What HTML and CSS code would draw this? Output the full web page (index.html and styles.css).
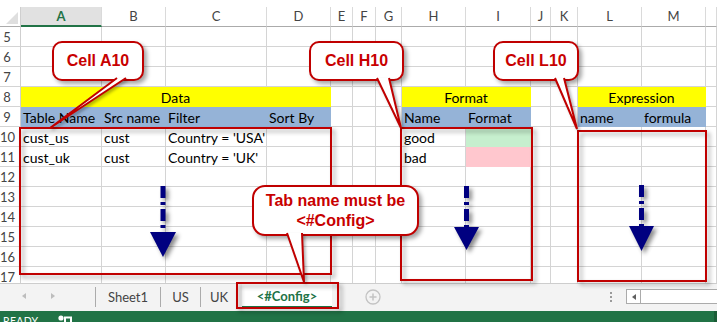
FILE: index.html
```html
<!DOCTYPE html>
<html>
<head>
<meta charset="utf-8">
<link rel="stylesheet" href="styles.css">
</head>
<body>
<div class="app">
  <div class="sheet">
    <div class="strip"></div>
    <div class="grid">
      <div class="c corner"><span class="tri"></span></div>
      <div class="c h sel">A</div><div class="c h">B</div><div class="c h">C</div><div class="c h">D</div><div class="c h">E</div><div class="c h">F</div><div class="c h">G</div><div class="c h">H</div><div class="c h">I</div><div class="c h">J</div><div class="c h">K</div><div class="c h">L</div><div class="c h">M</div><div class="c h"></div>

      <div class="c rh">5</div><div class="c"></div><div class="c"></div><div class="c"></div><div class="c"></div><div class="c"></div><div class="c"></div><div class="c"></div><div class="c"></div><div class="c"></div><div class="c"></div><div class="c"></div><div class="c"></div><div class="c"></div><div class="c"></div>
      <div class="c rh">6</div><div class="c"></div><div class="c"></div><div class="c"></div><div class="c"></div><div class="c"></div><div class="c"></div><div class="c"></div><div class="c"></div><div class="c"></div><div class="c"></div><div class="c"></div><div class="c"></div><div class="c"></div><div class="c"></div>
      <div class="c rh">7</div><div class="c"></div><div class="c"></div><div class="c"></div><div class="c"></div><div class="c"></div><div class="c"></div><div class="c"></div><div class="c"></div><div class="c"></div><div class="c"></div><div class="c"></div><div class="c"></div><div class="c"></div><div class="c"></div>

      <div class="c rh">8</div><div class="c y s4">Data</div><div class="c"></div><div class="c"></div><div class="c"></div><div class="c y s2">Format</div><div class="c"></div><div class="c"></div><div class="c y s2">Expression</div><div class="c"></div>

      <div class="c rh">9</div><div class="c b">Table Name</div><div class="c b">Src name</div><div class="c b">Filter</div><div class="c b">Sort By</div><div class="c"></div><div class="c"></div><div class="c"></div><div class="c b">Name</div><div class="c b">Format</div><div class="c"></div><div class="c"></div><div class="c b">name</div><div class="c b">formula</div><div class="c"></div>

      <div class="c rh">10</div><div class="c">cust_us</div><div class="c">cust</div><div class="c">Country = 'USA'</div><div class="c"></div><div class="c"></div><div class="c"></div><div class="c"></div><div class="c">good</div><div class="c g"></div><div class="c"></div><div class="c"></div><div class="c"></div><div class="c"></div><div class="c"></div>
      <div class="c rh">11</div><div class="c">cust_uk</div><div class="c">cust</div><div class="c">Country = 'UK'</div><div class="c"></div><div class="c"></div><div class="c"></div><div class="c"></div><div class="c">bad</div><div class="c p"></div><div class="c"></div><div class="c"></div><div class="c"></div><div class="c"></div><div class="c"></div>

      <div class="c rh">12</div><div class="c"></div><div class="c"></div><div class="c"></div><div class="c"></div><div class="c"></div><div class="c"></div><div class="c"></div><div class="c"></div><div class="c"></div><div class="c"></div><div class="c"></div><div class="c"></div><div class="c"></div><div class="c"></div>
      <div class="c rh">13</div><div class="c"></div><div class="c"></div><div class="c"></div><div class="c"></div><div class="c"></div><div class="c"></div><div class="c"></div><div class="c"></div><div class="c"></div><div class="c"></div><div class="c"></div><div class="c"></div><div class="c"></div><div class="c"></div>
      <div class="c rh">14</div><div class="c"></div><div class="c"></div><div class="c"></div><div class="c"></div><div class="c"></div><div class="c"></div><div class="c"></div><div class="c"></div><div class="c"></div><div class="c"></div><div class="c"></div><div class="c"></div><div class="c"></div><div class="c"></div>
      <div class="c rh">15</div><div class="c"></div><div class="c"></div><div class="c"></div><div class="c"></div><div class="c"></div><div class="c"></div><div class="c"></div><div class="c"></div><div class="c"></div><div class="c"></div><div class="c"></div><div class="c"></div><div class="c"></div><div class="c"></div>
      <div class="c rh">16</div><div class="c"></div><div class="c"></div><div class="c"></div><div class="c"></div><div class="c"></div><div class="c"></div><div class="c"></div><div class="c"></div><div class="c"></div><div class="c"></div><div class="c"></div><div class="c"></div><div class="c"></div><div class="c"></div>
      <div class="c rh">17</div><div class="c"></div><div class="c"></div><div class="c"></div><div class="c"></div><div class="c"></div><div class="c"></div><div class="c"></div><div class="c"></div><div class="c"></div><div class="c"></div><div class="c"></div><div class="c"></div><div class="c"></div><div class="c"></div>
    </div>
  </div>

  <div class="tabbar">
    <div class="nav"><span class="tri-l"></span><span class="tri-r"></span></div>
    <div class="tab t1">Sheet1</div>
    <div class="tab t2">US</div>
    <div class="tab t3">UK</div>
    <div class="tab active">&lt;#Config&gt;</div>
    <svg class="add" width="16" height="16" viewBox="0 0 16 16"><circle cx="8" cy="8" r="7" fill="none" stroke="#c3c3c3" stroke-width="1.3"/><path d="M8 4.5V11.5M4.5 8H11.5" stroke="#c3c3c3" stroke-width="1.5"/></svg>
    <div class="spacer"></div>
    <div class="dots"><span></span><span></span><span></span></div>
    <div class="hscroll"><div class="sbtn"><span class="stri"></span></div></div>
  </div>

  <div class="status">
    <span class="ready">READY</span>
    <svg class="macro" width="14" height="11" viewBox="0 0 14 11"><circle cx="3" cy="3" r="2.6" fill="#fff"/><rect x="6" y="1.5" width="8" height="9" fill="#fff"/><rect x="8" y="3.5" width="4" height="4" fill="#217346"/></svg>
    <span class="sfill"></span>
    <span class="edge"></span>
  </div>

  <div class="frame f1"></div>
  <div class="frame f2"></div>
  <div class="frame f3"></div>
  <div class="frame f4"></div>

  <div class="callout k1">Cell A10</div>
  <div class="callout k2">Cell H10</div>
  <div class="callout k3">Cell L10</div>
  <div class="callout k4">Tab name must be<br>&lt;#Config&gt;</div>

  <svg class="overlay" width="717" height="322" viewBox="0 0 717 322">
    <g class="tail">
      <path d="M117,78 L50,128 L126,78" />
      <path d="M377,78 L401,128 L389,78" />
      <path d="M555,78 L577,129 L564,78" />
      <path d="M287,233 L304,282 L302,233" />
    </g>
    <g class="arrow">
      <line x1="163" y1="186" x2="163" y2="234" />
      <polygon points="150,232 176,232 163,257" />
      <line x1="466.5" y1="186" x2="466.5" y2="229" />
      <polygon points="454,227 479,227 466.5,250" />
      <line x1="641.5" y1="185" x2="641.5" y2="228" />
      <polygon points="629,226 654,226 641.5,251" />
    </g>
  </svg>
</div>
</body>
</html>
```

FILE: styles.css
```css
* { box-sizing: border-box; }

body {
  margin: 0;
  background: #fff;
}

.app {
  position: relative;
  width: 717px;
  height: 322px;
  overflow: hidden;
  font-family: Lato, "Liberation Sans", Arial, sans-serif;
  background: #fff;
}

.sheet {
  height: 283px;
  overflow: hidden;
}

.strip { height: 7px; }

.grid {
  display: grid;
  grid-template-columns: 21px 81px 64px 101px 64px 22px 23px 26px 64px 65px 20px 27px 64px 64px 11px;
  grid-auto-rows: 20px;
}

.c {
  border-right: 1px solid #d4d4d4;
  border-bottom: 1px solid #d4d4d4;
  padding: 1px 0 0 2px;
  font-size: 14px;
  line-height: 19px;
  white-space: nowrap;
  color: #000;
}

.h {
  padding: 0;
  text-align: center;
  color: #444;
  font-size: 13px;
  line-height: 19px;
  border-right-color: #dadada;
  border-bottom-color: #ababab;
}

.h.sel {
  background: #e1e1e1;
  border-bottom: 2px solid #217346;
  color: #217346;
  font-weight: bold;
}

.corner {
  padding: 0 2px 2px 0;
  display: flex;
  align-items: flex-end;
  justify-content: flex-end;
  border-right-color: #cfcfcf;
  border-bottom-color: #ababab;
}

.corner .tri {
  width: 12px;
  height: 12px;
  background: #dfdfdf;
  clip-path: polygon(100% 0, 100% 100%, 0 100%);
}

.rh {
  padding: 1px 6px 0 0;
  text-align: center;
  color: #444;
  font-size: 13px;
  border-right-color: #cfcfcf;
}

.y { background: #ffff00; border-color: #ffff00; text-align: center; padding-left: 0; }
.b { background: #95b3d7; border-color: #95b3d7; }
.g { background: #c6efce; border-color: #c6efce; }
.p { background: #ffc7ce; border-color: #ffc7ce; }
.s4 { grid-column: span 4; }
.s2 { grid-column: span 2; }

/* tab bar */
.tabbar {
  display: flex;
  align-items: flex-start;
  height: 28px;
  background: #f3f3f3;
  border-top: 1px solid #cdcdcd;
}

.nav {
  width: 95px;
  height: 27px;
  display: flex;
  align-items: flex-start;
  gap: 25px;
  padding: 9px 0 0 22px;
}

.tri-l, .tri-r {
  width: 0;
  height: 0;
  border-top: 3.5px solid transparent;
  border-bottom: 3.5px solid transparent;
}
.tri-l { border-right: 4px solid #bdbdbd; }
.tri-r { border-left: 4px solid #bdbdbd; }

.tab {
  margin-top: 3px;
  height: 20px;
  border-left: 1px solid #ababab;
  font-size: 13px;
  line-height: 20px;
  color: #444;
  text-align: center;
  flex-shrink: 0;
}
.t1 { width: 65px; }
.t2 { width: 40px; }
.t3 { width: 37px; }

.tab.active {
  margin: 0 0 0 5px;
  width: 90px;
  height: 25px;
  border-left: none;
  border-bottom: 3px solid #217346;
  background: #fff;
  color: #217346;
  font-weight: bold;
  line-height: 24px;
}

.add {
  margin: 5px 0 0 33px;
  flex-shrink: 0;
}

.spacer { flex: 1; }

.dots {
  margin: 8px 14px 0 0;
  display: flex;
  flex-direction: column;
  gap: 2px;
}
.dots span {
  width: 2px;
  height: 2px;
  background: #9a9a9a;
}

.hscroll {
  width: 91px;
  height: 15px;
  margin-top: 5px;
  border: 1px solid #ababab;
  border-right: none;
  background: #fff;
  display: flex;
  flex-shrink: 0;
}

.sbtn {
  width: 14px;
  border-right: 1px solid #ababab;
  display: flex;
  align-items: center;
  justify-content: center;
}

.stri {
  width: 0;
  height: 0;
  border-top: 3.5px solid transparent;
  border-bottom: 3.5px solid transparent;
  border-right: 4px solid #606060;
}

/* status bar */
.status {
  display: flex;
  align-items: flex-start;
  height: 22px;
  background: #217346;
  color: #fff;
}

.ready {
  padding: 4px 0 0 3px;
  font-size: 10.5px;
  letter-spacing: 0.3px;
}

.macro {
  margin: 4px 0 0 20px;
}

.sfill { flex: 1; }

.edge {
  width: 3px;
  height: 22px;
  background: #1a5c37;
}

/* annotation overlays */
.frame {
  position: absolute;
  border: 2px solid #c00000;
  filter: drop-shadow(3px 3px 2px rgba(0, 0, 0, 0.35));
}
.f1 { left: 19px; top: 127px; width: 313px; height: 148px; }
.f2 { left: 400px; top: 127px; width: 133px; height: 154px; }
.f3 { left: 577px; top: 130px; width: 130px; height: 152px; }
.f4 { left: 236px; top: 282px; width: 103px; height: 27px; }

.callout {
  position: absolute;
  display: flex;
  align-items: center;
  justify-content: center;
  text-align: center;
  background: #fff;
  border: 2px solid #c00000;
  border-radius: 10px;
  color: #c80000;
  font-family: "Liberation Sans", Arial, sans-serif;
  font-weight: bold;
  font-size: 16px;
  box-shadow: 3px 3px 4px rgba(0, 0, 0, 0.35);
}
.k1 { left: 52px; top: 41px; width: 92px; height: 40px; }
.k2 { left: 309px; top: 41px; width: 95px; height: 40px; }
.k3 { left: 493px; top: 41px; width: 86px; height: 40px; }
.k4 { left: 252px; top: 185px; width: 167px; height: 51px; line-height: 20px; border-radius: 13px; }

.overlay {
  position: absolute;
  left: 0;
  top: 0;
  pointer-events: none;
}

.tail path {
  fill: #fff;
  stroke: #c00000;
  stroke-width: 2;
}
.tail {
  filter: drop-shadow(2px 2px 1.5px rgba(0, 0, 0, 0.3));
}

.arrow {
  filter: drop-shadow(3px 3px 2px rgba(0, 0, 0, 0.45));
}
.arrow line {
  stroke: #000080;
  stroke-width: 5;
  stroke-dasharray: 12 4 3 4;
}
.arrow polygon {
  fill: #000080;
}
```
